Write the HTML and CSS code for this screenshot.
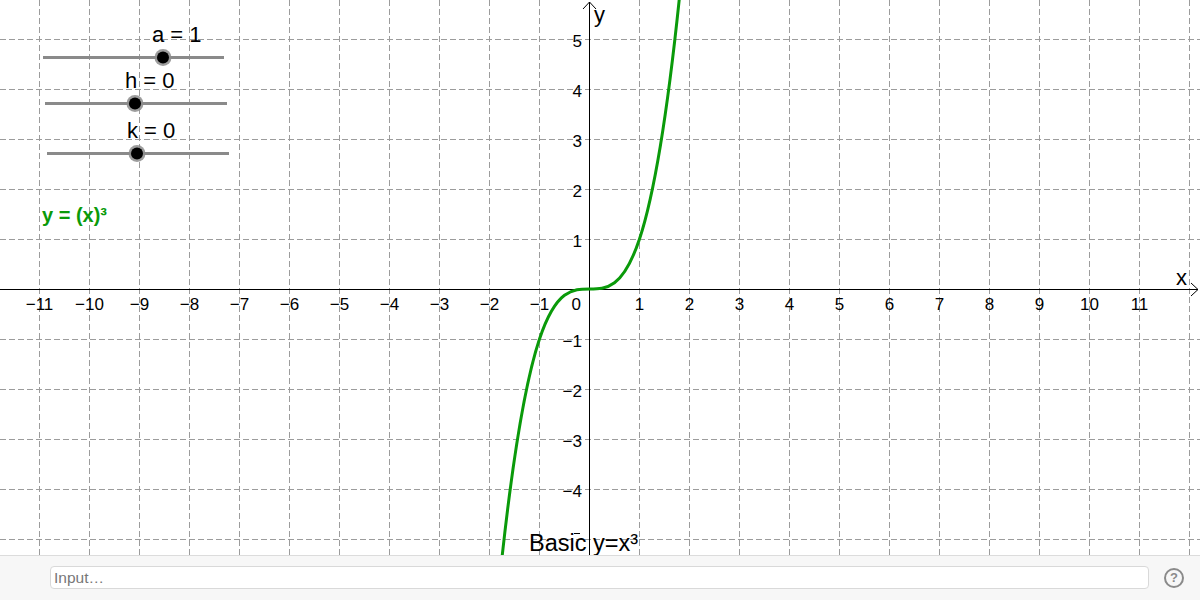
FILE: index.html
```html
<!DOCTYPE html>
<html>
<head>
<meta charset="utf-8">
<link rel="stylesheet" href="styles.css">
</head>
<body>
<div class="app">
  <div class="graph">
    <svg class="canvas" width="1200" height="555" viewBox="0 0 1200 555" xmlns="http://www.w3.org/2000/svg">
      <path class="grid" d="M39.5 0V555M89.5 0V555M139.5 0V555M189.5 0V555M239.5 0V555M289.5 0V555M339.5 0V555M389.5 0V555M439.5 0V555M489.5 0V555M539.5 0V555M639.5 0V555M689.5 0V555M739.5 0V555M789.5 0V555M839.5 0V555M889.5 0V555M939.5 0V555M989.5 0V555M1039.5 0V555M1089.5 0V555M1139.5 0V555M1189.5 0V555"/>
      <path class="grid" d="M0 39.5H1200M0 89.5H1200M0 139.5H1200M0 189.5H1200M0 239.5H1200M0 339.5H1200M0 389.5H1200M0 439.5H1200M0 489.5H1200M0 539.5H1200"/>

      <path class="axis" d="M0 289.5H1198M589.5 555V2"/>
      <path class="arrow" d="M1191 283L1198 289.5L1191 296M583 9L589.5 2L596 9"/>

      <g class="xnum">
        <text x="39.5" y="310">−11</text>
        <text x="89.5" y="310">−10</text>
        <text x="139.5" y="310">−9</text>
        <text x="189.5" y="310">−8</text>
        <text x="239.5" y="310">−7</text>
        <text x="289.5" y="310">−6</text>
        <text x="339.5" y="310">−5</text>
        <text x="389.5" y="310">−4</text>
        <text x="439.5" y="310">−3</text>
        <text x="489.5" y="310">−2</text>
        <text x="539.5" y="310">−1</text>
        <text x="639.5" y="310">1</text>
        <text x="689.5" y="310">2</text>
        <text x="739.5" y="310">3</text>
        <text x="789.5" y="310">4</text>
        <text x="839.5" y="310">5</text>
        <text x="889.5" y="310">6</text>
        <text x="939.5" y="310">7</text>
        <text x="989.5" y="310">8</text>
        <text x="1039.5" y="310">9</text>
        <text x="1089.5" y="310">10</text>
        <text x="1139.5" y="310">11</text>
      </g>
      <g class="ynum">
        <text x="582" y="47">5</text>
        <text x="582" y="97">4</text>
        <text x="582" y="147">3</text>
        <text x="582" y="197">2</text>
        <text x="582" y="247">1</text>
        <text x="581" y="310">0</text>
        <text x="582" y="347">−1</text>
        <text x="582" y="397">−2</text>
        <text x="582" y="447">−3</text>
        <text x="582" y="497">−4</text>
      </g>
      <path class="tick" d="M574 533.5H580"/>

      <text class="axname" x="1176" y="285">x</text>
      <text class="axname" x="594" y="22">y</text>

      <path class="curve" d="M489.5 689C556.17 -111 622.83 689 689.5 -111"/>

      <g class="slider">
        <text class="slabel" x="152" y="42">a = 1</text>
        <path class="strack" d="M43 57.5H224"/>
        <circle class="halo" cx="163" cy="57.5" r="8.5"/>
        <circle class="knob" cx="163" cy="57.5" r="6"/>
      </g>
      <g class="slider">
        <text class="slabel" x="125" y="88">h = 0</text>
        <path class="strack" d="M45 103.5H227"/>
        <circle class="halo" cx="135" cy="103.5" r="8.5"/>
        <circle class="knob" cx="135" cy="103.5" r="6"/>
      </g>
      <g class="slider">
        <text class="slabel" x="127" y="138">k = 0</text>
        <path class="strack" d="M47 153.5H229"/>
        <circle class="halo" cx="137" cy="153.5" r="8.5"/>
        <circle class="knob" cx="137" cy="153.5" r="6"/>
      </g>

      <text class="fnlabel" x="42" y="222">y = (x)³</text>
      <text class="caption" x="529" y="551">Basic y=x³</text>
    </svg>
  </div>
  <div class="bar">
    <input class="input" type="text" placeholder="Input…">
    <div class="help">?</div>
  </div>
</div>
</body>
</html>
```
FILE: styles.css
```css
html, body {
  margin: 0;
  padding: 0;
  background: #ffffff;
  overflow: hidden;
}

.app {
  width: 1200px;
  height: 600px;
  display: flex;
  flex-direction: column;
  font-family: "Liberation Sans", Arial, sans-serif;
}

.graph {
  height: 555px;
  background: #ffffff;
}

.canvas {
  display: block;
}

.grid {
  fill: none;
  stroke: #9c9c9c;
  stroke-width: 1;
  stroke-dasharray: 6 3;
}

.axis {
  fill: none;
  stroke: #000000;
  stroke-width: 1;
}

.arrow {
  fill: none;
  stroke: #000000;
  stroke-width: 1;
}

.tick {
  stroke: #000000;
  stroke-width: 1;
}

.xnum text,
.ynum text {
  font-family: "Liberation Sans", Arial, sans-serif;
  font-size: 17px;
  fill: #000000;
}

.xnum text {
  text-anchor: middle;
}

.ynum text {
  text-anchor: end;
}

.axname {
  font-family: "Liberation Sans", Arial, sans-serif;
  font-size: 22px;
  fill: #000000;
}

.curve {
  fill: none;
  stroke: #0a9a0a;
  stroke-width: 3;
}

.slabel {
  font-family: "Liberation Sans", Arial, sans-serif;
  font-size: 22px;
  fill: #000000;
}

.strack {
  fill: none;
  stroke: #8a8a8a;
  stroke-width: 3;
}

.halo {
  fill: #8c8c8c;
  opacity: 0.85;
}

.knob {
  fill: #000000;
}

.fnlabel {
  font-family: "Liberation Sans", Arial, sans-serif;
  font-size: 20px;
  font-weight: bold;
  fill: #0a9a0a;
}

.caption {
  font-family: "Liberation Sans", Arial, sans-serif;
  font-size: 23.5px;
  fill: #000000;
}

.bar {
  border-top: 1px solid #dcdcdc;
  background: #f7f7f7;
  display: flex;
  align-items: flex-start;
  padding: 10px 16px 0 50px;
  gap: 15px;
  box-sizing: border-box;
  height: 45px;
}

.input {
  flex: 1;
  height: 23px;
  box-sizing: border-box;
  border: 1px solid #d9d9d9;
  border-radius: 4px;
  background: #ffffff;
  padding: 0 3px;
  margin: 0;
  font-family: "Liberation Sans", Arial, sans-serif;
  font-size: 15.5px;
  color: #333333;
  outline: none;
}

.input::placeholder {
  color: #777777;
}

.help {
  width: 20px;
  height: 20px;
  margin-top: 2px;
  box-sizing: border-box;
  border: 2px solid #8a8a8a;
  border-radius: 50%;
  color: #8a8a8a;
  font-family: "Liberation Sans", Arial, sans-serif;
  font-weight: bold;
  font-size: 13px;
  line-height: 16px;
  text-align: center;
}
```
